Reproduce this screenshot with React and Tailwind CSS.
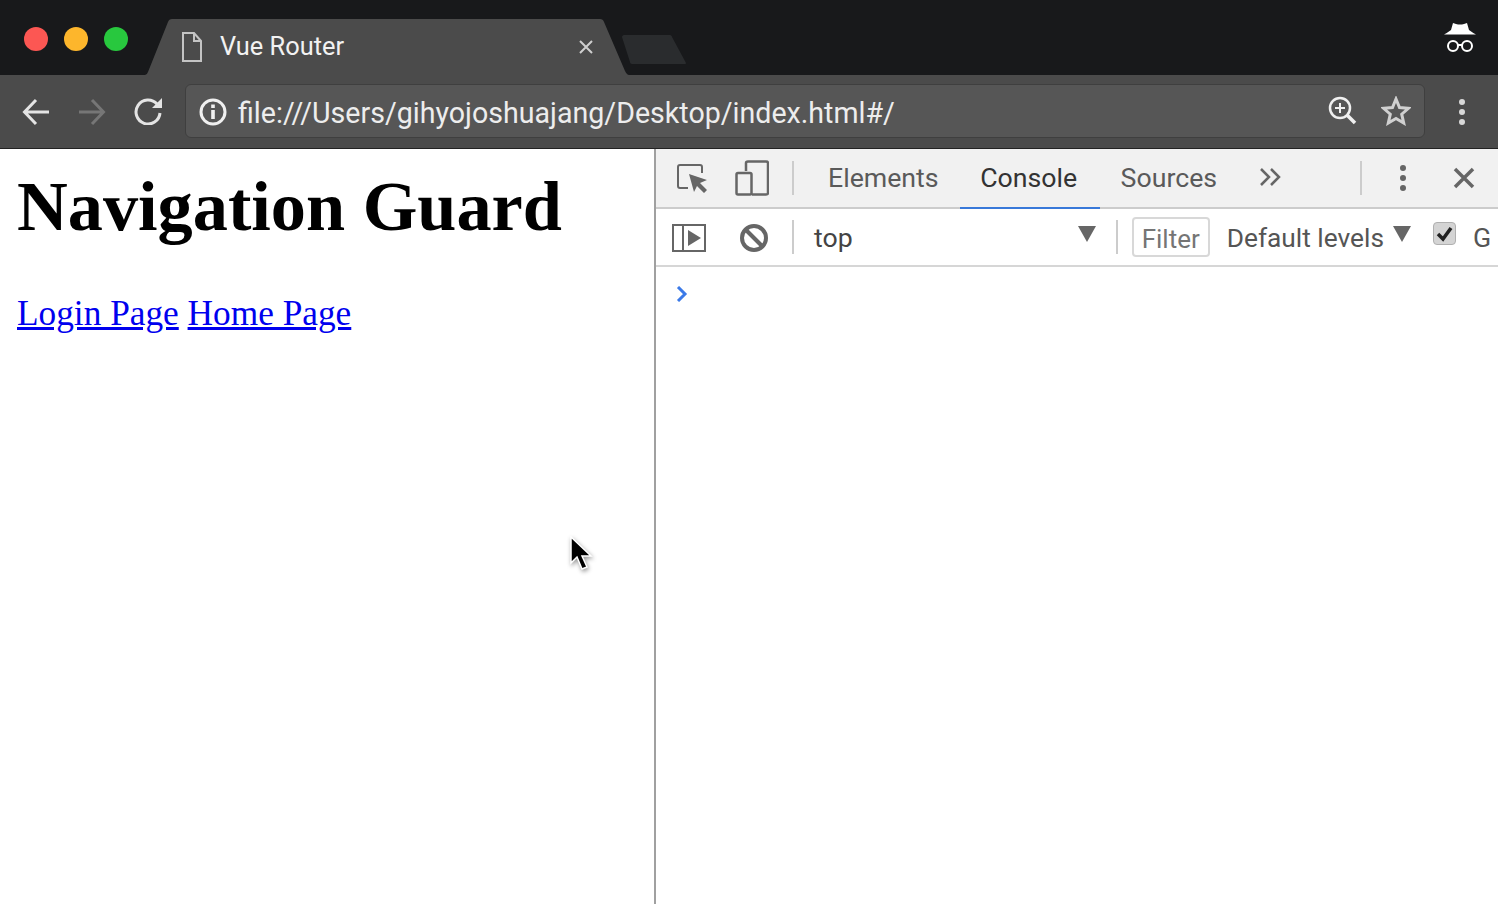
import React from "react";

const uiFont = "font-['Roboto',sans-serif]";

const Dots = ({ color, className }) => (
  <svg width="8" height="28" viewBox="0 0 8 28" className={className}>
    <circle cx="4" cy="4" r="3" fill={color} />
    <circle cx="4" cy="14" r="3" fill={color} />
    <circle cx="4" cy="24" r="3" fill={color} />
  </svg>
);

const Separator = ({ className }) => <div className={`w-[2px] h-[34px] bg-[#ccc] shrink-0 ${className}`} />;

const Caret = ({ className }) => (
  <svg width="18" height="16" viewBox="0 0 18 16" className={className}>
    <path d="M0 0H18L9 16Z" fill="#666" />
  </svg>
);

const TitleBar = () => (
  <div className="flex h-[75px] bg-[#18191b] shrink-0">
    <div className="flex items-start gap-[16px] pl-[24px] pt-[27px] w-[145px] shrink-0">
      <div className="w-[24px] h-[24px] rounded-full bg-[#fc5753]" />
      <div className="w-[24px] h-[24px] rounded-full bg-[#fdb62c]" />
      <div className="w-[24px] h-[24px] rounded-full bg-[#28c83e]" />
    </div>

    <div className="relative mt-[19px] w-[484px] h-[56px] shrink-0">
      <svg width="484" height="56" viewBox="0 0 484 56" className="absolute inset-0">
        <path d="M0 56Q2 56 3 53L23 3Q24 0 27 0H455Q458 0 459 3L480 52Q482 56 484 56Z" fill="#4b4b4b" />
      </svg>
      <div className="relative flex items-center h-full pb-[1px]">
        <svg width="22" height="32" viewBox="0 0 22 32" className="ml-[36px]" fill="none" stroke="#c4c4c4" strokeWidth="2">
          <path d="M2 2H13L20 10V30H2Z" />
          <path d="M13 2V10H20" />
        </svg>
        <span className={`ml-[17px] text-[25.400px] leading-none text-[#f2f2f2] ${uiFont}`}>Vue Router</span>
        <svg width="16" height="16" viewBox="0 0 16 16" className="ml-[234px]" stroke="#cfcfcf" strokeWidth="2">
          <path d="M2 2L14 14M14 2L2 14" />
        </svg>
      </div>
    </div>

    <svg width="66" height="30" viewBox="0 0 66 30" className="mt-[35px] -ml-[9px]">
      <path d="M2 2C2 1 3 0 4 0H50C51 0 52 1 52 2L66 28C66 29 65 29 64 29H12C11 29 10 28 10 27Z" fill="#2a2c2e" />
    </svg>

    <div className="ml-auto mr-[22px] mt-[22px]">
      <svg width="32" height="32" viewBox="0 0 32 32" fill="#fff">
        <path d="M9 1L12 2Q16 3 20 2L23 1L25 8Q29 11 32 12.500H0Q3 11 7 8Z" />
        <circle cx="9" cy="24" r="5" fill="none" stroke="#fff" strokeWidth="2" />
        <circle cx="23" cy="24" r="5" fill="none" stroke="#fff" strokeWidth="2" />
        <path d="M14 23H18" stroke="#fff" strokeWidth="2" />
      </svg>
    </div>
  </div>
);

const AddressBar = () => (
  <div className="flex items-center h-[74px] bg-[#4b4b4b] border-b border-[#222] shrink-0 pb-[2px]">
    <svg width="28" height="28" viewBox="0 0 28 28" className="ml-[22px] mt-[2px]" fill="none" stroke="#e4e4e4" strokeWidth="3">
      <path d="M27 14H3M14 2L2.500 14L14 26" />
    </svg>
    <svg width="28" height="28" viewBox="0 0 28 28" className="ml-[28px] mt-[2px]" fill="none" stroke="#767676" strokeWidth="3">
      <path d="M1 14H25M14 2L25.500 14L14 26" />
    </svg>
    <svg width="30" height="28" viewBox="0 0 30 28" className="ml-[28px]" fill="none">
      <path d="M23 7A12 12 0 1 0 26 16" stroke="#e4e4e4" strokeWidth="3" />
      <path d="M28 1V11H18Z" fill="#e4e4e4" />
    </svg>
    <div className="flex items-center ml-[21px] w-[1240px] h-[54px] rounded-[6px] bg-[#565656] border border-[#3f3f3f]">
      <svg width="28" height="28" viewBox="0 0 28 28" className="ml-[13px] mt-[2px]" fill="none">
        <circle cx="14" cy="14" r="12" stroke="#f0f0f0" strokeWidth="3" />
        <rect x="12.200" y="12" width="3.600" height="9" fill="#f0f0f0" />
        <rect x="12.200" y="6.500" width="3.600" height="3.500" fill="#f0f0f0" />
      </svg>
      <span className={`ml-[11px] mt-[6px] text-[28.600px] leading-none text-[#ededed] ${uiFont}`}>file:///Users/gihyojoshuajang/Desktop/index.html#/</span>
      <svg width="30" height="30" viewBox="0 0 30 30" className="ml-auto" fill="none" stroke="#f0f0f0">
        <circle cx="12" cy="12" r="10" strokeWidth="2.500" />
        <path d="M12 7V17M7 12H17" strokeWidth="2" />
        <path d="M19 19L27 27" strokeWidth="3.500" />
      </svg>
      <svg width="30" height="30" viewBox="0 0 30 30" className="ml-[23px] mr-[13px]" fill="none" stroke="#d0d0d0" strokeWidth="3">
        <path d="M15 3L18.500 11.500L27.500 12.300L20.700 18.200L22.700 27L15 22.400L7.300 27L9.300 18.200L2.500 12.300L11.500 11.500Z" />
      </svg>
    </div>
    <Dots color="#d8d8d8" className="ml-[33px] mt-[2px]" />
  </div>
);

const PageContent = () => (
  <div className="w-[654px] shrink-0 bg-white pl-[17px] font-['Liberation_Serif',serif] text-black">
    <h1 className="text-[70.300px] leading-[78px] font-bold mt-[18px] whitespace-nowrap">Navigation Guard</h1>
    <p className="text-[35.300px] leading-[42px] mt-[48px]">
      <a href="#login" className="text-[#0000ee] underline">Login Page</a>{" "}
      <a href="#home" className="text-[#0000ee] underline">Home Page</a>
    </p>
  </div>
);

const DevTools = () => (
  <div className={`flex-1 flex flex-col min-w-0 overflow-hidden border-l-2 border-[#a0a0a0] bg-white ${uiFont}`}>
    <div className="flex items-center h-[60px] bg-[#f1f1f1] border-b-2 border-[#ccc] shrink-0">
      <svg width="32" height="32" viewBox="0 0 32 32" className="ml-[20px]" fill="none">
        <path d="M12 26H4Q2 26 2 24V5Q2 3 4 3H24Q26 3 26 5V11" stroke="#666" strokeWidth="2" />
        <path d="M13 12L31 18L24 21L31 28L28 31L21 24L18 30Z" fill="#666" />
      </svg>
      <svg width="34" height="36" viewBox="0 0 34 36" className="ml-[27px]" fill="none" stroke="#666" strokeWidth="2.500">
        <path d="M11 11V3Q11 1.500 13 1.500H31Q33 1.500 33 3V33Q33 34.500 31 34.500H17" />
        <rect x="1.500" y="13" width="15" height="21.500" rx="1.500" />
      </svg>
      <Separator className="ml-[23px]" />
      <span className="ml-[34px] text-[26.700px] leading-none text-[#5a5a5a]">Elements</span>
      <div className="relative ml-[21px] flex items-center justify-center w-[140px] h-[58px] pr-[2px]">
        <span className="text-[26.700px] leading-none text-[#333]">Console</span>
        <div className="absolute left-0 right-0 -bottom-[2px] h-[2px] bg-[#3879d9]" />
      </div>
      <span className="ml-[21px] text-[26.700px] leading-none text-[#5a5a5a]">Sources</span>
      <svg width="22" height="20" viewBox="0 0 22 20" className="ml-[42px] -mt-[2px]" fill="none" stroke="#666" strokeWidth="2.500">
        <path d="M2 2L10 10L2 18M12 2L20 10L12 18" />
      </svg>
      <Separator className="ml-[79px]" />
      <Dots color="#666" className="ml-[37px]" />
      <svg width="22" height="22" viewBox="0 0 22 22" className="ml-[46px]" stroke="#666" strokeWidth="3.500">
        <path d="M2 2L20 20M20 2L2 20" />
      </svg>
    </div>

    <div className="flex items-center h-[58px] border-b-2 border-[#d6d6d6] shrink-0 whitespace-nowrap">
      <svg width="34" height="30" viewBox="0 0 34 30" className="ml-[16px] mt-[2px]" fill="none" stroke="#666" strokeWidth="2">
        <rect x="1" y="2" width="32" height="26" />
        <path d="M11 2V28" />
        <path d="M16 7L29 15L16 23Z" fill="#666" stroke="none" />
      </svg>
      <svg width="30" height="30" viewBox="0 0 30 30" className="ml-[33px] mt-[1px]" fill="none" stroke="#666" strokeWidth="4">
        <circle cx="15" cy="15" r="12" />
        <path d="M6.500 6.500L23.500 23.500" />
      </svg>
      <Separator className="ml-[23px]" />
      <span className="ml-[20px] mt-[3px] text-[26.700px] leading-none text-[#444]">top</span>
      <Caret className="ml-[225px] -mt-[6px]" />
      <Separator className="ml-[20px]" />
      <div className="ml-[14px] pt-[4px] flex items-center justify-center w-[78px] h-[40px] border-2 border-[#d8d8d8] rounded-[4px] text-[26px] leading-none text-[#757575]">Filter</div>
      <span className="ml-[17px] mt-[3px] text-[26.300px] leading-none text-[#555]">Default levels</span>
      <Caret className="ml-[9px] -mt-[6px]" />
      <div className="ml-[22px] -mt-[7px] flex items-center justify-center w-[23px] h-[23px] rounded-[4px] bg-[#d4d4d4] border border-[#b0b0b0]">
        <svg width="17" height="16" viewBox="0 0 17 16" fill="none" stroke="#222" strokeWidth="3.500">
          <path d="M2 8L7 13L15 2" />
        </svg>
      </div>
      <span className="ml-[17px] mt-[3px] text-[26.700px] leading-none text-[#555]">G</span>
    </div>

    <div className="pl-[20px] pt-[19px]">
      <svg width="12" height="16" viewBox="0 0 12 16" fill="none" stroke="#3b7ae8" strokeWidth="3">
        <path d="M2 1L9 8L2 15" />
      </svg>
    </div>
  </div>
);

const App = () => (
  <div className="relative w-[1498px] h-[904px] flex flex-col overflow-hidden bg-white">
    <TitleBar />
    <AddressBar />
    <div className="flex flex-1 min-h-0">
      <PageContent />
      <DevTools />
    </div>
    {/* mouse cursor floats over the page */}
    <svg width="24" height="36" viewBox="0 0 24 36" className="absolute left-[569px] top-[536px] drop-shadow-[1px_2px_2px_rgba(0,0,0,0.4)]">
      <path d="M2 1V27L8 21L13 33L18 31L13 20H22Z" fill="#000" stroke="#fff" strokeWidth="1.500" />
    </svg>
  </div>
);

export default App;
